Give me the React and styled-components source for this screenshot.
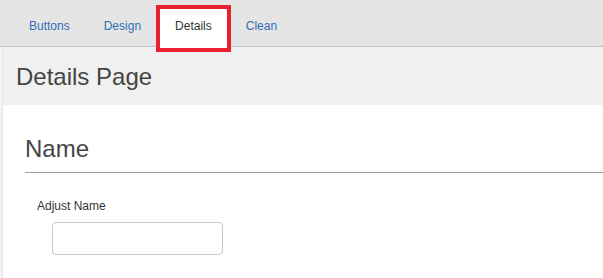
import React from "react";
import styled, { createGlobalStyle, css } from "styled-components";

const Global = createGlobalStyle`
  html, body { margin: 0; padding: 0; }
  body {
    background: #ffffff;
    font-family: "Liberation Sans", Arial, Helvetica, sans-serif;
    color: #333;
    overflow: hidden;
  }
`;

const Page = styled.div`
  width: 603px;
  height: 278px;
  display: flex;
  flex-direction: column;
  background: #f3f3f3;
`;

const TabBar = styled.nav`
  position: relative;
  z-index: 2;
  height: 46px;
  display: flex;
  padding-left: 12px;
  background: linear-gradient(#e5e5e5 0, #e5e5e5 40px, #e1e1e1 46px);
  border-bottom: 1px solid #c6c6c6;
`;

const Tab = styled.a`
  box-sizing: border-box;
  height: 46px;
  padding: 19px 17px 0;
  font-size: 12px;
  line-height: 14px;
  color: #2f6db5;
  text-decoration: none;
  cursor: pointer;
  ${(p) =>
    p.$active &&
    css`
      margin-top: 7px;
      height: 43px;
      padding-top: 12px;
      color: #333;
      background: #ffffff;
      outline: 4px solid #e8202f;
      outline-offset: -2px;
    `}
`;

const Body = styled.div`
  flex: 1;
  margin-left: 2px;
  border-left: 1px solid #e4e4e4;
  display: flex;
  flex-direction: column;
`;

const Header = styled.header`
  height: 58px;
  box-sizing: border-box;
  padding: 16px 0 0 13px;
  background: #f0f0f0;
`;

const PageTitle = styled.h1`
  margin: 0;
  font-size: 24px;
  line-height: 28px;
  font-weight: 400;
  color: #454545;
`;

const Content = styled.main`
  flex: 1;
  background: #ffffff;
  padding: 30px 0 0 22px;
`;

const SectionTitle = styled.h2`
  margin: 0;
  padding-bottom: 9px;
  font-size: 24px;
  line-height: 28px;
  font-weight: 400;
  color: #454545;
  border-bottom: 1px solid #9c9c9c;
`;

const Field = styled.div`
  display: flex;
  flex-direction: column;
  align-items: flex-start;
  padding: 26px 0 0 12px;
  gap: 9px;
`;

const Label = styled.label`
  font-size: 12px;
  line-height: 14px;
  color: #333;
`;

const Input = styled.input`
  box-sizing: border-box;
  margin-left: 15px;
  width: 171px;
  height: 33px;
  border: 1px solid #c8c8c8;
  border-radius: 4px;
  background: #fff;
  font-family: inherit;
  font-size: 12px;
  padding: 0 8px;
  outline: none;
`;

const tabs = ["Buttons", "Design", "Details", "Clean"];

export default function App() {
  return (
    <>
      <Global />
      <Page>
        <TabBar>
          {tabs.map((t) => (
            <Tab key={t} $active={t === "Details"}>
              {t}
            </Tab>
          ))}
        </TabBar>
        <Body>
          <Header>
            <PageTitle>Details Page</PageTitle>
          </Header>
          <Content>
            <SectionTitle>Name</SectionTitle>
            <Field>
              <Label htmlFor="adjust-name">Adjust Name</Label>
              <Input id="adjust-name" type="text" />
            </Field>
          </Content>
        </Body>
      </Page>
    </>
  );
}
